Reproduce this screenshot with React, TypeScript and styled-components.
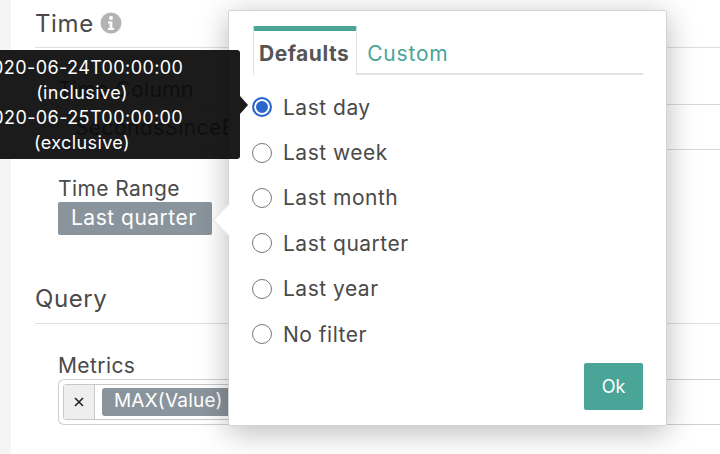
import { FunctionComponent } from "react";
import styled, { createGlobalStyle } from "styled-components";

const ranges = ["Last day", "Last week", "Last month", "Last quarter", "Last year", "No filter"];

const App: FunctionComponent = () => (
  <Page>
    <GlobalStyle />
    <Panel>
      <SectionTitle>
        Time
        <InfoIcon viewBox="0 0 22 22">
          <circle cx="11" cy="11" r="10.5" fill="#b3b3b3" />
          <circle cx="11" cy="6" r="2" fill="#fff" />
          <path d="M8 9.5h4.4v6.6H14v2H8v-2h1.6v-4.6H8z" fill="#fff" />
        </InfoIcon>
      </SectionTitle>
      <Field>
        <FieldLabel>Time Column</FieldLabel>
        <SelectBox>SecondsSinceEpoch</SelectBox>
      </Field>
      <RangeField>
        <FieldLabel>Time Range</FieldLabel>
        <Pill>Last quarter</Pill>
      </RangeField>
      <QueryTitle>Query</QueryTitle>
      <Field>
        <FieldLabel>Metrics</FieldLabel>
        <MultiSelect>
          <MultiSelectInner>
            <ClearBox>
              <svg width="10" height="10" viewBox="0 0 10 10">
                <path d="M1 1l8 8M9 1l-8 8" stroke="#222" strokeWidth="1.6" />
              </svg>
            </ClearBox>
            <MetricPill>MAX(Value)</MetricPill>
          </MultiSelectInner>
        </MultiSelect>
      </Field>
    </Panel>

    <Popover>
      <PopoverArrow />
      <Tabs>
        <Tab $active>Defaults</Tab>
        <Tab>Custom</Tab>
      </Tabs>
      <RadioList>
        {ranges.map((range, index) => (
          <RadioRow key={range}>
            <Radio $checked={index === 0} />
            {range}
          </RadioRow>
        ))}
      </RadioList>
      <Footer>
        <OkButton>Ok</OkButton>
      </Footer>
    </Popover>

    <Tooltip>
      2020-06-24T00:00:00
      <br />
      (inclusive)
      <br />
      2020-06-25T00:00:00
      <br />
      (exclusive)
      <TooltipArrow />
    </Tooltip>
  </Page>
);

const GlobalStyle = createGlobalStyle`
  html, body {
    margin: 0;
    height: 100%;
    overflow: hidden;
    background: #f5f5f5;
  }
  body {
    font-family: Inter, "Liberation Sans", sans-serif;
    color: #4a4a4a;
  }
`;

const Page = styled.div`
  position: relative;
  width: 720px;
  height: 454px;
  overflow: hidden;
  padding-left: 11px;
  box-sizing: border-box;
`;

const Panel = styled.div`
  background: #fff;
  height: 100%;
  padding-left: 24px;
`;

const SectionTitle = styled.div`
  display: flex;
  align-items: center;
  gap: 6px;
  height: 47px;
  font-size: 24px;
  letter-spacing: 0.6px;
  border-bottom: 1px solid #d9e0e4;
`;

const QueryTitle = styled(SectionTitle)`
  height: 50px;
  margin-top: 38px;
`;

const InfoIcon = styled.svg`
  width: 22px;
  height: 22px;
  margin-top: -2px;
`;

const Field = styled.div`
  padding: 27px 0 0 23px;
`;

const RangeField = styled(Field)`
  padding-top: 24px;
`;

const FieldLabel = styled.div`
  padding-top: 2px;
  font-size: 21px;
  line-height: 26px;
  letter-spacing: 0.4px;
`;

const SelectBox = styled.div`
  height: 44px;
  line-height: 46px;
  margin-top: 1px;
  padding-left: 16px;
  border: 1px solid #d9d9d9;
  border-right: none;
  border-radius: 4px 0 0 4px;
  font-size: 21px;
  letter-spacing: 0.4px;
`;

const Pill = styled.div`
  width: fit-content;
  height: 33px;
  line-height: 32px;
  padding: 0 15px 0 13px;
  background: #8a949c;
  border-radius: 2px;
  color: #fff;
  font-size: 21px;
  letter-spacing: 0.5px;
`;

const MultiSelect = styled.div`
  height: 36px;
  padding: 4px;
  border: 1px solid #cfcfcf;
  border-right: none;
  border-radius: 6px 0 0 6px;
`;

const MultiSelectInner = styled.div`
  display: flex;
  align-items: center;
  gap: 7px;
  width: 300px;
  height: 100%;
  box-sizing: border-box;
  border: 1px solid #c8c8c8;
  border-radius: 3px;
`;

const ClearBox = styled.div`
  display: flex;
  align-items: center;
  justify-content: center;
  width: 30px;
  height: 100%;
  background: #eee;
  border-right: 1px solid #c8c8c8;
`;

const MetricPill = styled.div`
  height: 28px;
  line-height: 25px;
  padding: 0 12px;
  background: #8a949c;
  border-radius: 3px;
  color: #fff;
  font-size: 19px;
  letter-spacing: 0.2px;
`;

const Popover = styled.div`
  position: absolute;
  left: 228px;
  top: 10px;
  width: 439px;
  height: 416px;
  box-sizing: border-box;
  padding: 15px 23px 0 24px;
  background: #fff;
  border: 1px solid #d4d4d4;
  border-radius: 2px;
  box-shadow: 0 6px 30px rgba(0, 0, 0, 0.28);
`;

const PopoverArrow = styled.div`
  position: absolute;
  left: -12px;
  top: 198px;
  width: 22px;
  height: 22px;
  background: #fff;
  border-left: 1px solid #e4e4e4;
  border-bottom: 1px solid #e4e4e4;
  box-sizing: border-box;
  transform: rotate(45deg);
`;

const Tabs = styled.div`
  display: flex;
  height: 47px;
  border-bottom: 2px solid #dde3e6;
`;

const Tab = styled.div<{ $active?: boolean }>`
  height: 49px;
  box-sizing: border-box;
  padding: ${(p) => (p.$active ? "0 7px 0 5px" : "0 9px")};
  line-height: 46px;
  font-size: 21px;
  letter-spacing: ${(p) => (p.$active ? "0.5px" : "0.8px")};
  font-weight: ${(p) => (p.$active ? 700 : 400)};
  color: ${(p) => (p.$active ? "#555" : "#4aa598")};
  background: ${(p) => (p.$active ? "#fff" : "transparent")};
  border-top: 5px solid ${(p) => (p.$active ? "#4aa598" : "transparent")};
  border-left: 1px solid ${(p) => (p.$active ? "#dde3e6" : "transparent")};
  border-right: 1px solid ${(p) => (p.$active ? "#dde3e6" : "transparent")};
  border-radius: 2px 2px 0 0;
`;

const RadioList = styled.div`
  display: flex;
  flex-direction: column;
  margin-left: -1px;
  padding-top: 9.5px;
`;

const RadioRow = styled.div`
  display: flex;
  align-items: center;
  gap: 11px;
  height: 45.4px;
  font-size: 21px;
  letter-spacing: 0.5px;
`;

const Radio = styled.span<{ $checked?: boolean }>`
  width: 20px;
  height: 20px;
  box-sizing: border-box;
  border-radius: 50%;
  border: ${(p) => (p.$checked ? "2px solid #2b66cc" : "1.5px solid #777")};
  background: ${(p) => (p.$checked ? "#2b66cc" : "#fff")};
  box-shadow: ${(p) => (p.$checked ? "inset 0 0 0 2px #fff" : "none")};
`;

const Footer = styled.div`
  display: flex;
  justify-content: flex-end;
  margin-top: 6.1px;
`;

const OkButton = styled.button`
  width: 59px;
  height: 47px;
  border: none;
  border-radius: 2px;
  background: #4aa598;
  color: #fff;
  font-family: inherit;
  font-size: 18px;
`;

const Tooltip = styled.div`
  position: absolute;
  left: -76px;
  top: 50px;
  width: 316px;
  height: 109px;
  box-sizing: border-box;
  padding-top: 5px;
  background: rgba(10, 10, 10, 0.93);
  border-radius: 3px;
  color: #fff;
  font-size: 18px;
  line-height: 25px;
  letter-spacing: 0.4px;
  text-align: center;
`;

const TooltipArrow = styled.div`
  position: absolute;
  right: -8px;
  top: 46px;
  border-style: solid;
  border-width: 9px 0 9px 8px;
  border-color: transparent transparent transparent rgba(10, 10, 10, 0.93);
`;

export default App;
